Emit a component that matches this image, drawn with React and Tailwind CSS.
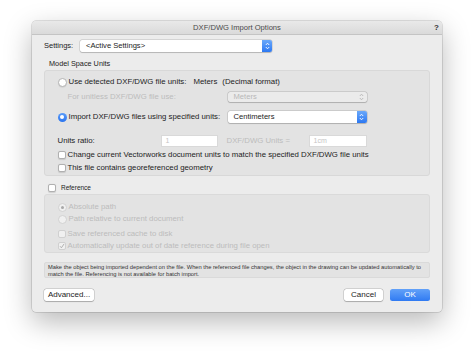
import React from "react";

const F = { fontFamily: '"Liberation Sans", Arial, sans-serif' };

function Stepper({ disabled }) {
  return (
    <div
      className={
        disabled
          ? "w-[10px] h-full flex items-center justify-center"
          : "w-[10px] h-full flex items-center justify-center rounded-r-[2px] bg-gradient-to-b from-[#6aa8fa] to-[#2c78f2]"
      }
    >
      <svg width="5" height="8" viewBox="0 0 5 8">
        <path d="M0.8 3 L2.5 1.2 L4.2 3" fill="none" stroke={disabled ? "#b5b5b5" : "#fff"} strokeWidth="0.9" />
        <path d="M0.8 5 L2.5 6.8 L4.2 5" fill="none" stroke={disabled ? "#b5b5b5" : "#fff"} strokeWidth="0.9" />
      </svg>
    </div>
  );
}

function Popup({ text, w, h, disabled }) {
  return (
    <div
      className={
        "flex items-center justify-between rounded-[2px] shadow-[0_0_0_0.5px_rgba(0,0,0,0.18),0_0.5px_1px_rgba(0,0,0,0.15)] " +
        (disabled ? "bg-[#ebebeb]" : "bg-white")
      }
      style={{ width: w, height: h }}
    >
      <span className={"pl-[6px] text-[7.6px] " + (disabled ? "text-[#b8b8b8]" : "text-[#1c1c1c]")}>{text}</span>
      <Stepper disabled={disabled} />
    </div>
  );
}

function Radio({ on, disabled }) {
  if (on && !disabled)
    return (
      <div className="w-[9px] h-[9px] rounded-full bg-gradient-to-b from-[#5b9cf8] to-[#2a74ef] flex items-center justify-center shrink-0">
        <div className="w-[3.5px] h-[3.5px] rounded-full bg-white" />
      </div>
    );
  return (
    <div
      className={
        "w-[9px] h-[9px] rounded-full flex items-center justify-center shrink-0 " +
        (disabled ? "bg-[#f0f0f0] border-[0.5px] border-[#d2d2d2]" : "bg-white border-[0.5px] border-[#b5b5b5] shadow-[0_0.5px_1px_rgba(0,0,0,0.12)]")
      }
    >
      {on && <div className="w-[3px] h-[3px] rounded-full bg-[#a8a8a8]" />}
    </div>
  );
}

function Check({ on, disabled }) {
  return (
    <div
      className={
        "w-[8px] h-[8px] rounded-[2px] flex items-center justify-center shrink-0 " +
        (disabled ? "bg-[#f0f0f0] border-[0.5px] border-[#d0d0d0]" : "bg-white border-[0.5px] border-[#b0b0b0] shadow-[0_0.5px_1px_rgba(0,0,0,0.12)]")
      }
    >
      {on && (
        <svg width="6" height="6" viewBox="0 0 6 6">
          <path d="M1 3.2 L2.4 4.8 L5 1" fill="none" stroke="#a9a9a9" strokeWidth="0.9" />
        </svg>
      )}
    </div>
  );
}

function Field({ text, w }) {
  return (
    <div className="h-[12px] bg-white border-[0.5px] border-[#d9d9d9] flex items-center pl-[4px]" style={{ width: w }}>
      <span className="text-[7px] text-[#c4c4c4]">{text}</span>
    </div>
  );
}

function Btn({ children, w, primary }) {
  return (
    <div
      className={
        "h-[12px] rounded-[2.5px] flex items-center justify-center text-[8px] " +
        (primary
          ? "bg-gradient-to-b from-[#62a1f8] to-[#2f7af2] text-white"
          : "bg-white text-[#1c1c1c] shadow-[0_0_0_0.5px_rgba(0,0,0,0.2),0_0.5px_1px_rgba(0,0,0,0.2)]")
      }
      style={{ width: w }}
    >
      {children}
    </div>
  );
}

export default function App() {
  const dis = "text-[#bcbcbc]";
  return (
    <div className="w-[474px] h-[355px] bg-white pt-[21px] pl-[32px] overflow-hidden" style={F}>
      <div className="w-[410px] bg-[#ececec] rounded-[4px] shadow-[0_0_0_0.5px_rgba(0,0,0,0.22),0_10px_28px_rgba(0,0,0,0.28)] pb-[11px]">
        {/* title bar */}
        <div className="h-[14px] rounded-t-[4px] bg-gradient-to-b from-[#e9e9e9] to-[#dadada] border-b-[0.5px] border-[#c4c4c4] flex items-center justify-center relative">
          <span className="text-[7.6px] text-[#4a4a4a]">DXF/DWG Import Options</span>
          <span className="absolute right-[3px] top-[1px] text-[8px] font-bold text-[#333]">?</span>
        </div>

        <div className="px-[12px]">
          {/* settings row */}
          <div className="mt-[5px] h-[12px] flex items-center">
            <span className="w-[36px] text-[7.5px] text-[#1c1c1c]">Settings:</span>
            <Popup text="<Active Settings>" w={192} h={12} />
          </div>

          <div className="mt-[7px] h-[11px] pl-[5px] flex items-center text-[7.3px] text-[#1c1c1c]">Model Space Units</div>

          {/* group */}
          <div className="h-[106px] bg-[#e3e3e3] border-[0.5px] border-[#d8d8d8] rounded-[3px] pl-[12.5px] pt-[5px] text-[7.8px] text-[#1c1c1c]">
            <div className="h-[12px] flex items-center">
              <Radio />
              <span className="ml-[2px] w-[125px]">Use detected DXF/DWG file units:</span>
              <span>Meters</span>
              <span className="ml-[5px]">(Decimal format)</span>
            </div>
            <div className="mt-[3px] h-[12px] flex items-center">
              <span className={"pl-[10px] w-[170px] " + dis}>For unitless DXF/DWG file use:</span>
              <Popup text="Meters" w={139} h={10} disabled />
            </div>
            <div className="mt-[8px] h-[12px] flex items-center">
              <Radio on />
              <span className="ml-[2px] w-[159px]">Import DXF/DWG files using specified units:</span>
              <Popup text="Centimeters" w={139} h={12} />
            </div>
            <div className="mt-[12px] h-[12px] flex items-center">
              <span className="w-[103px]">Units ratio:</span>
              <Field text="1" w={57} />
              <span className={"ml-[9px] w-[82px] " + dis}>DXF/DWG Units =</span>
              <Field text="1cm" w={58} />
            </div>
            <div className="mt-[2px] h-[12px] flex items-center">
              <Check />
              <span className="ml-[2px]">Change current Vectorworks document units to match the specified DXF/DWG file units</span>
            </div>
            <div className="mt-[1px] h-[12px] flex items-center">
              <Check />
              <span className="ml-[2px]">This file contains georeferenced geometry</span>
            </div>
          </div>

          {/* reference header */}
          <div className="mt-[6px] h-[12px] pl-[4px] flex items-center">
            <Check />
            <span className="ml-[5px] text-[6.5px] text-[#1c1c1c]">Reference</span>
          </div>

          {/* reference panel */}
          <div className={"h-[59px] bg-[#e3e3e3] border-[0.5px] border-[#dadada] rounded-[3px] pl-[12.5px] pt-[6px] text-[7.8px] " + dis}>
            <div className="h-[12px] flex items-center">
              <Radio on disabled />
              <span className="ml-[2px]">Absolute path</span>
            </div>
            <div className="h-[12px] flex items-center">
              <Radio disabled />
              <span className="ml-[2px]">Path relative to current document</span>
            </div>
            <div className="mt-[3px] h-[12px] flex items-center">
              <Check disabled />
              <span className="ml-[2px]">Save referenced cache to disk</span>
            </div>
            <div className="h-[12px] flex items-center">
              <Check on disabled />
              <span className="ml-[2px]">Automatically update out of date reference during file open</span>
            </div>
          </div>

          {/* description */}
          <div className="mt-[9px] h-[16px] bg-[#e3e3e3] border-[0.5px] border-[#dadada] rounded-[2px] pl-[3px] pt-[1px] text-[5.75px] leading-[6.6px] text-[#333] whitespace-nowrap overflow-hidden">
            <div>Make the object being imported dependent on the file. When the referenced file changes, the object in the drawing can be updated automatically to</div>
            <div>match the file. Referencing is not available for batch import.</div>
          </div>

          {/* buttons */}
          <div className="mt-[11px] flex items-center">
            <Btn w={50}>Advanced...</Btn>
            <div className="flex-1" />
            <Btn w={39}>Cancel</Btn>
            <div className="w-[7px]" />
            <Btn w={40} primary>OK</Btn>
          </div>
        </div>
      </div>
    </div>
  );
}
